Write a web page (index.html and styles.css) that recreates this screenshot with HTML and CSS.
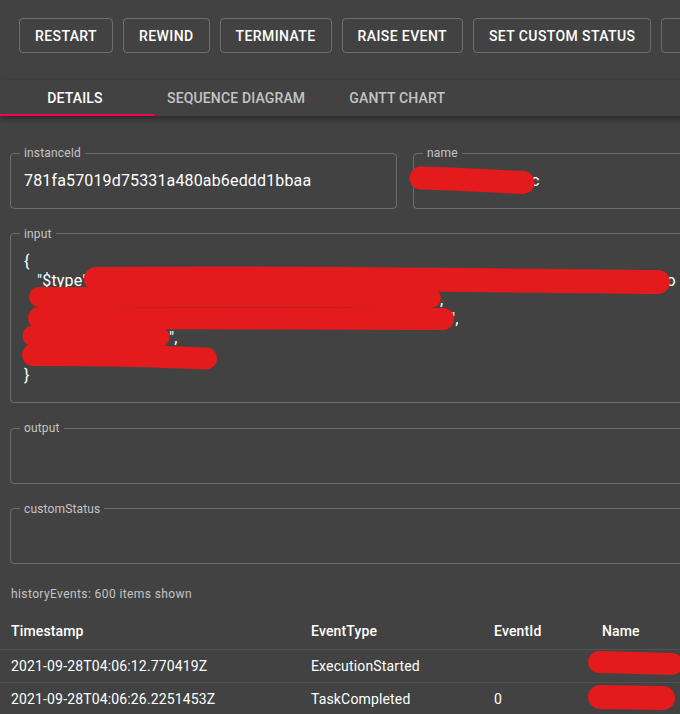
FILE: index.html
```html
<!DOCTYPE html>
<html>
<head>
<meta charset="utf-8">
<title>Orchestration details</title>
<link rel="stylesheet" href="styles.css">
</head>
<body>
<div class="page">
  <div class="toolbar">
    <button class="btn">RESTART</button>
    <button class="btn">REWIND</button>
    <button class="btn">TERMINATE</button>
    <button class="btn">RAISE EVENT</button>
    <button class="btn">SET CUSTOM STATUS</button>
    <button class="btn btn-more" aria-label="Purge"></button>
  </div>

  <div class="tabbar">
    <div class="tabs">
      <div class="tab active">DETAILS</div>
      <div class="tab">SEQUENCE DIAGRAM</div>
      <div class="tab">GANTT CHART</div>
    </div>
  </div>

  <div class="details">
    <div class="row">
      <fieldset class="field f-id">
        <legend>instanceId</legend>
        <div class="value">781fa57019d75331a480ab6eddd1bbaa</div>
      </fieldset>
      <fieldset class="field f-name">
        <legend>name</legend>
        <div class="value"><span class="gap g-name"></span>c</div>
      </fieldset>
    </div>

    <fieldset class="field f-wide">
      <legend>input</legend>
      <div class="value">
        <div class="line">{</div>
        <div class="line ind">"$type"<span class="gap g-l2"></span>o</div>
        <div class="line"><span class="gap g-l3"></span>,</div>
        <div class="line"><span class="gap g-l4"></span>",</div>
        <div class="line"><span class="gap g-l5"></span>",</div>
        <div class="line">&nbsp;</div>
        <div class="line">}</div>
      </div>
    </fieldset>

    <fieldset class="field f-wide">
      <legend>output</legend>
      <div class="value">&nbsp;</div>
    </fieldset>

    <fieldset class="field f-wide">
      <legend>customStatus</legend>
      <div class="value">&nbsp;</div>
    </fieldset>
  </div>

  <div class="history">historyEvents: 600 items shown</div>

  <table class="events">
    <colgroup>
      <col class="c1"><col class="c2"><col class="c3"><col class="c4">
    </colgroup>
    <thead>
      <tr><th>Timestamp</th><th>EventType</th><th>EventId</th><th>Name</th></tr>
    </thead>
    <tbody>
      <tr><td>2021-09-28T04:06:12.770419Z</td><td>ExecutionStarted</td><td></td><td>&nbsp;</td></tr>
      <tr><td>2021-09-28T04:06:26.2251453Z</td><td>TaskCompleted</td><td>0</td><td>&nbsp;</td></tr>
    </tbody>
  </table>
</div>

<svg class="redact" width="680" height="714" viewBox="0 0 680 714" aria-hidden="true">
  <g fill="none" stroke="#e31b1c" stroke-linecap="round" stroke-linejoin="round">
    <path d="M421 178 C 460 179, 490 181, 523 182.5" stroke-width="23"/>
    <path d="M96 279 C 250 277, 450 280, 658 282" stroke-width="24"/>
    <path d="M39 297 L431 298" stroke-width="20"/>
    <path d="M39 318 L443 319" stroke-width="22"/>
    <path d="M33 336 L159 337" stroke-width="21"/>
    <path d="M33 355 C 100 355, 150 356, 206 358.5" stroke-width="22"/>
    <path d="M599 662 L672 664" stroke-width="22"/>
    <path d="M600 697 L663 698" stroke-width="24"/>
  </g>
</svg>
</body>
</html>
```

FILE: styles.css
```css
html, body {
  margin: 0;
  padding: 0;
  overflow: hidden;
  background: #424242;
}

body {
  font-family: Roboto, "Noto Sans", "Liberation Sans", sans-serif;
  color: #fff;
  width: 680px;
  height: 714px;
}

.page {
  width: 1000px;
}

/* toolbar */
.toolbar {
  display: flex;
  gap: 10px;
  padding: 18px 0 0 19px;
}

.btn {
  flex: none;
  height: 35px;
  padding: 0 15px;
  border: 1px solid rgba(255, 255, 255, 0.23);
  border-radius: 4px;
  background: transparent;
  color: #fff;
  font-family: Roboto, "Noto Sans", sans-serif;
  font-size: 14px;
  font-weight: 500;
  letter-spacing: 0.4px;
  white-space: nowrap;
}

.btn-more {
  width: 80px;
}

/* tabs */
.tabbar {
  margin-top: 27px;
  height: 36px;
  background: #424242;
  box-shadow: 0 2px 4px -1px rgba(0, 0, 0, 0.2), 0 4px 5px 0 rgba(0, 0, 0, 0.14), 0 1px 10px 0 rgba(0, 0, 0, 0.12);
  position: relative;
}

.tabs {
  display: flex;
  margin-left: -5px;
  height: 36px;
}

.tab {
  min-width: 160px;
  padding: 0 12px;
  box-sizing: border-box;
  display: flex;
  align-items: center;
  justify-content: center;
  font-size: 14px;
  font-weight: 500;
  letter-spacing: 0.15px;
  color: rgba(255, 255, 255, 0.7);
  white-space: nowrap;
}

.tab.active {
  color: #fff;
  box-shadow: inset 0 -2px 0 #f50057;
}

/* outlined fields */
.details {
  padding: 31px 0 0 10px;
}

.row {
  display: flex;
  gap: 16px;
}

.field {
  margin: 0;
  padding: 0 13px;
  border: 1px solid rgba(255, 255, 255, 0.23);
  border-radius: 4px;
  min-width: 0;
  box-sizing: border-box;
}

.field legend {
  font-size: 12px;
  line-height: 12px;
  letter-spacing: 0.15px;
  color: rgba(255, 255, 255, 0.7);
  padding: 0 4px;
  margin-left: -4px;
}

.f-id {
  width: 387px;
}

.f-name {
  width: 420px;
}

.f-wide {
  width: 900px;
  margin-top: 19px;
}

.value {
  font-size: 16px;
  line-height: 19px;
  letter-spacing: 0.15px;
  padding: 12px 0 17.5px;
  color: #fff;
  white-space: nowrap;
}

.line {
  height: 19px;
  white-space: pre;
}

.ind {
  padding-left: 13px;
}

.gap {
  display: inline-block;
  height: 1px;
}

.g-name { width: 104px; }
.g-l2 { width: 579px; }
.g-l3 { width: 416px; }
.g-l4 { width: 426px; }
.g-l5 { width: 145px; }

/* history */
.history {
  margin: 20px 0 9px 11px;
  font-size: 12px;
  line-height: 20px;
  letter-spacing: 0.4px;
  color: rgba(255, 255, 255, 0.7);
}

.events {
  border-collapse: collapse;
  table-layout: fixed;
  width: 900px;
}

.c1 { width: 300px; }
.c2 { width: 183px; }
.c3 { width: 108px; }
.c4 { width: 309px; }

.events th,
.events td {
  padding: 6px 11px;
  border-bottom: 1px solid #515151;
  text-align: left;
  font-size: 14px;
  letter-spacing: 0.15px;
  white-space: nowrap;
  overflow: hidden;
}

.events th {
  font-weight: 500;
  line-height: 24px;
  color: #fff;
}

.events td {
  font-weight: 400;
  line-height: 20px;
  color: #fff;
}

/* redaction marks drawn over the screenshot content */
.redact {
  position: absolute;
  top: 0;
  left: 0;
  pointer-events: none;
}
```
